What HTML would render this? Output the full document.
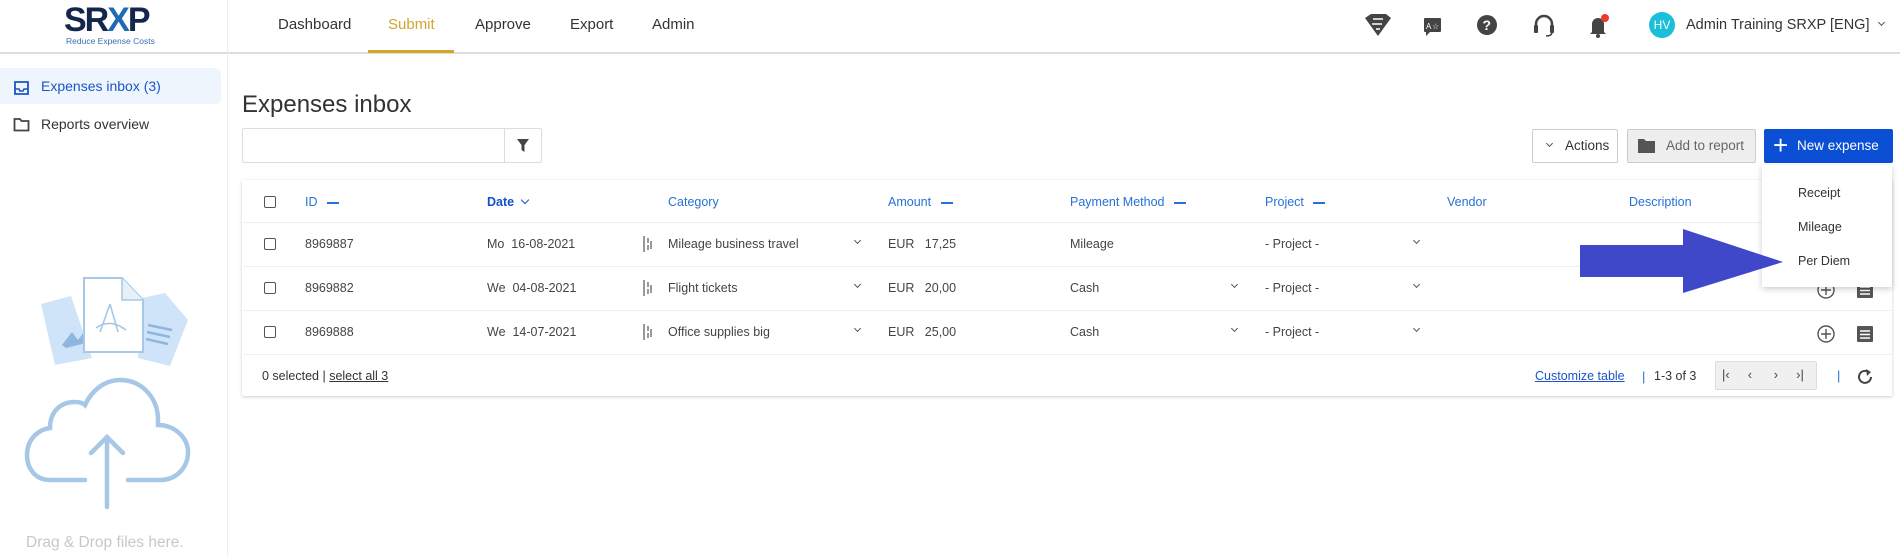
<!DOCTYPE html>
<html><head><meta charset="utf-8"><style>
*{margin:0;padding:0;box-sizing:border-box}
body{width:1900px;height:556px;background:#fff;font-family:"Liberation Sans",sans-serif;position:relative;overflow:hidden;color:#333}
.a{position:absolute;white-space:nowrap}
.nav{font-size:15px;color:#333;top:16px}
.th{font-size:12.5px;color:#2672d6;top:195px}
.td{font-size:12.5px;color:#444}
.cb{position:absolute;left:264px;width:12px;height:12px;border:1.3px solid #555;border-radius:2px}
.chev{position:absolute;width:6px;height:6px;border-right:1.3px solid #555;border-bottom:1.3px solid #555;transform:rotate(45deg)}
.sep{position:absolute;left:243px;width:1648px;height:1px;background:#eee}
</style></head><body>
<!-- header -->
<div class="a" style="left:0;top:52px;width:1900px;height:2px;background:#ddd"></div>
<div class="a" style="left:227px;top:0;width:1px;height:556px;background:#eee"></div>
<div class="a" style="left:64px;top:1px;font-size:34px;font-weight:bold;color:#14264a;letter-spacing:-2px;font-family:'Liberation Sans',sans-serif">SR<span style="color:#1f6ab5">X</span>P</div>
<div class="a" style="left:66px;top:36px;font-size:8.5px;color:#3a6fb5">Reduce Expense Costs</div>
<div class="a nav" style="left:278px">Dashboard</div>
<div class="a nav" style="left:388px;color:#d4a52a">Submit</div>
<div class="a" style="left:368px;top:50px;width:86px;height:3px;background:#d4a52a"></div>
<div class="a nav" style="left:475px">Approve</div>
<div class="a nav" style="left:570px">Export</div>
<div class="a nav" style="left:652px">Admin</div>
<!-- right icons -->
<svg class="a" style="left:1362px;top:12px" width="260" height="28" viewBox="0 0 260 28">
<path d="M3 6 L9 2 H24 L29 6 L16 24 Z" fill="#444"/><path d="M11 7 H21 M10 12 H20 M14 17 H18" stroke="#fff" stroke-width="1.6"/>
<rect x="62" y="6" width="17" height="14" rx="1" fill="#444"/><path d="M64 20 L64 24 L68 20Z" fill="#444"/><text x="64" y="17" font-size="8" fill="#fff" font-family="Liberation Sans">A</text><text x="70" y="17" font-size="8" fill="#fff">☆</text>
<circle cx="125" cy="13" r="10" fill="#444"/><text x="120.5" y="18" font-size="14" font-weight="bold" fill="#fff" font-family="Liberation Sans">?</text>
<path d="M174 18 V12 A8 8 0 0 1 190 12 V18" stroke="#444" stroke-width="2.5" fill="none"/><rect x="172" y="13" width="4" height="8" rx="1" fill="#444"/><rect x="188" y="13" width="4" height="8" rx="1" fill="#444"/><path d="M190 20 Q190 24 184 24" stroke="#444" stroke-width="1.5" fill="none"/>
<path d="M230 20 V12 A6 6 0 0 1 242 12 V20 L244 22 H228 Z" fill="#444"/><circle cx="236" cy="24" r="2" fill="#444"/><circle cx="243" cy="6" r="4" fill="#ee3a2d"/>
</svg>
<div class="a" style="left:1649px;top:12px;width:26px;height:26px;border-radius:50%;background:#1bbfd9;color:#fff;font-size:12px;line-height:26px;text-align:center">HV</div>
<div class="a" style="left:1686px;top:17px;font-size:14.5px;color:#333">Admin Training SRXP [ENG]</div>
<div class="chev" style="left:1879px;top:20px;width:5px;height:5px"></div>
<!-- sidebar -->
<div class="a" style="left:0;top:68px;width:221px;height:36px;background:#eef5fd;border-radius:0 6px 6px 0"></div>
<svg class="a" style="left:13px;top:80px" width="17" height="16"><path d="M2 2 H15 V14 H2 Z" stroke="#1a55c8" stroke-width="1.8" fill="none"/><path d="M2 9 H6 L7 11 H10 L11 9 H15" stroke="#1a55c8" stroke-width="1.6" fill="none"/></svg>
<div class="a" style="left:41px;top:78px;font-size:14px;color:#1a55c8">Expenses inbox (3)</div>
<svg class="a" style="left:13px;top:117px" width="17" height="15"><path d="M1.5 2 H7 L8.5 4 H15.5 V13.5 H1.5 Z" stroke="#444" stroke-width="1.8" fill="none"/></svg>
<div class="a" style="left:41px;top:116px;font-size:14px;color:#333">Reports overview</div>
<svg class="a" style="left:0;top:270px" width="227" height="250">
<polygon points="41,34 71,26 92,88 55,95" fill="#cfe4f8"/>
<polygon points="142,28 165,23 188,50 170,96 138,88" fill="#cfe4f8"/>
<path d="M62 75 L72 62 L78 70 L84 62 L90 72 L66 78Z" fill="#8fb6e0"/>
<path d="M148 55 L172 60 M147 62 L170 67 M146 69 L168 74" stroke="#8fb6e0" stroke-width="2.5"/>
<path d="M84 8 H122 L143 30 V82 H84 Z" fill="#fff" stroke="#a6c8e6" stroke-width="2"/>
<path d="M122 8 V30 H143" fill="#e6f0fa" stroke="#a6c8e6" stroke-width="1.5"/>
<path d="M110 34 L100 62 M110 34 L118 62 M96 58 Q110 48 126 60" stroke="#a6c8e6" stroke-width="1.6" fill="none"/>
<path d="M85 210 H50 C35 210 27 198 27 185 C27 170 37 160 50 158 C50 142 60 132 75 132 C80 132 83 133 85 135 C92 120 105 110 120 110 C142 110 158 128 158 150 L158 155 C175 155 188 168 188 182 C188 198 176 210 160 210 H128" stroke="#a6c8e6" stroke-width="4.5" fill="none" stroke-linecap="round"/>
<path d="M107 237 V167 M91 183 L107 167 L123 183" stroke="#a6c8e6" stroke-width="4.5" fill="none" stroke-linecap="round"/>
</svg>
<div class="a" style="left:26px;top:534px;font-size:15.5px;color:#c8c8c8">Drag &amp; Drop files here.</div>
<!-- main -->
<div class="a" style="left:242px;top:91px;font-size:24px;color:#333">Expenses inbox</div>
<div class="a" style="left:242px;top:128px;width:300px;height:35px;border:1px solid #ddd;border-radius:2px"></div>
<div class="a" style="left:504px;top:128px;width:1px;height:35px;background:#ddd"></div>
<svg class="a" style="left:516px;top:138px" width="14" height="15"><path d="M1 1 H13 L8.5 7 V14 L5.5 12 V7 Z" fill="#444"/></svg>
<div class="a" style="left:1532px;top:129px;width:86px;height:34px;border:1px solid #ccc;border-radius:2px"></div>
<div class="chev" style="left:1547px;top:141px;width:5px;height:5px"></div>
<div class="a" style="left:1565px;top:138px;font-size:13.5px;color:#333">Actions</div>
<div class="a" style="left:1627px;top:129px;width:129px;height:34px;border:1px solid #ccc;background:#eee;border-radius:2px"></div>
<svg class="a" style="left:1638px;top:138px" width="17" height="15"><path d="M0 1 H6 L8 3 H17 V15 H0 Z" fill="#555"/></svg>
<div class="a" style="left:1666px;top:138px;font-size:13.5px;color:#666">Add to report</div>
<div class="a" style="left:1764px;top:129px;width:129px;height:34px;background:#0a4fd4;border-radius:2px"></div>
<div class="a" style="left:1773px;top:129px;font-size:26px;color:#fff;line-height:32px">+</div>
<div class="a" style="left:1797px;top:138px;font-size:13.5px;color:#fff">New expense</div>
<!-- table card -->
<div class="a" style="left:242px;top:180px;width:1650px;height:216px;background:#fff;box-shadow:0 1px 3px rgba(0,0,0,.2);border-radius:2px"></div>
<div class="cb" style="top:196px"></div>
<div class="a th" style="left:305px">ID <span style="display:inline-block;width:12px;height:2px;background:#2672d6;vertical-align:middle;margin-left:6px"></span></div>
<div class="a th" style="left:487px;color:#1450c8;font-weight:bold">Date</div><div class="chev" style="left:522px;top:197px;border-color:#1450c8"></div>
<div class="a th" style="left:668px">Category</div>
<div class="a th" style="left:888px">Amount <span style="display:inline-block;width:12px;height:2px;background:#2672d6;vertical-align:middle;margin-left:6px"></span></div>
<div class="a th" style="left:1070px">Payment Method <span style="display:inline-block;width:12px;height:2px;background:#2672d6;vertical-align:middle;margin-left:6px"></span></div>
<div class="a th" style="left:1265px">Project <span style="display:inline-block;width:12px;height:2px;background:#2672d6;vertical-align:middle;margin-left:6px"></span></div>
<div class="a th" style="left:1447px">Vendor</div>
<div class="a th" style="left:1629px">Description</div>
<div class="sep" style="top:222px"></div>
<div class="sep" style="top:266px"></div>
<div class="sep" style="top:310px"></div>
<div class="sep" style="top:354px"></div>
<!-- rows -->
<div class="cb" style="top:238px"></div><div class="cb" style="top:282px"></div><div class="cb" style="top:326px"></div>
<div class="a td" style="left:305px;top:237px">8969887</div>
<div class="a td" style="left:305px;top:281px">8969882</div>
<div class="a td" style="left:305px;top:325px">8969888</div>
<div class="a td" style="left:487px;top:237px">Mo&nbsp; 16-08-2021</div>
<div class="a td" style="left:487px;top:281px">We&nbsp; 04-08-2021</div>
<div class="a td" style="left:487px;top:325px">We&nbsp; 14-07-2021</div>
<svg class="a" style="left:643px;top:236px" width="10" height="104"><g fill="#999"><rect x="0" y="0" width="2" height="16"/><rect x="4" y="2" width="2" height="5"/><rect x="4" y="9" width="2" height="5"/><rect x="7" y="5" width="2" height="8"/>
<rect x="0" y="44" width="2" height="16"/><rect x="4" y="46" width="2" height="5"/><rect x="4" y="53" width="2" height="5"/><rect x="7" y="49" width="2" height="8"/>
<rect x="0" y="88" width="2" height="16"/><rect x="4" y="90" width="2" height="5"/><rect x="4" y="97" width="2" height="5"/><rect x="7" y="93" width="2" height="8"/></g></svg>
<div class="a td" style="left:668px;top:237px">Mileage business travel</div>
<div class="a td" style="left:668px;top:281px">Flight tickets</div>
<div class="a td" style="left:668px;top:325px">Office supplies big</div>
<div class="chev" style="left:855px;top:238px;width:5px;height:5px"></div>
<div class="chev" style="left:855px;top:282px;width:5px;height:5px"></div>
<div class="chev" style="left:855px;top:326px;width:5px;height:5px"></div>
<div class="a td" style="left:888px;top:237px">EUR&nbsp;&nbsp; 17,25</div>
<div class="a td" style="left:888px;top:281px">EUR&nbsp;&nbsp; 20,00</div>
<div class="a td" style="left:888px;top:325px">EUR&nbsp;&nbsp; 25,00</div>
<div class="a td" style="left:1070px;top:237px">Mileage</div>
<div class="a td" style="left:1070px;top:281px">Cash</div>
<div class="a td" style="left:1070px;top:325px">Cash</div>
<div class="chev" style="left:1232px;top:282px;width:5px;height:5px"></div>
<div class="chev" style="left:1232px;top:326px;width:5px;height:5px"></div>
<div class="a td" style="left:1265px;top:237px">- Project -</div>
<div class="a td" style="left:1265px;top:281px">- Project -</div>
<div class="a td" style="left:1265px;top:325px">- Project -</div>
<div class="chev" style="left:1414px;top:238px;width:5px;height:5px"></div>
<div class="chev" style="left:1414px;top:282px;width:5px;height:5px"></div>
<div class="chev" style="left:1414px;top:326px;width:5px;height:5px"></div>
<svg class="a" style="left:1816px;top:280px" width="62" height="64">
<g><circle cx="10" cy="10" r="8" stroke="#555" stroke-width="1.4" fill="none"/><path d="M10 5 V15 M5 10 H15" stroke="#555" stroke-width="1.4"/></g>
<g transform="translate(0,44)"><circle cx="10" cy="10" r="8" stroke="#555" stroke-width="1.4" fill="none"/><path d="M10 5 V15 M5 10 H15" stroke="#555" stroke-width="1.4"/></g>
<g fill="#555"><rect x="41" y="2" width="16" height="16" rx="1"/><rect x="41" y="46" width="16" height="16" rx="1"/></g>
<g stroke="#fff" stroke-width="1.5"><path d="M44 7 H54 M44 10.5 H54 M44 14 H54"/><path d="M44 51 H54 M44 54.5 H54 M44 58 H54"/></g>
</svg>
<!-- footer -->
<div class="a td" style="left:262px;top:369px;color:#333">0 selected | <span style="text-decoration:underline">select all 3</span></div>
<div class="a td" style="left:1535px;top:369px;color:#1a55c8;text-decoration:underline">Customize table</div>
<div class="a" style="left:1642px;top:369px;font-size:13px;color:#2672d6">|</div>
<div class="a td" style="left:1654px;top:369px;color:#333">1-3 of 3</div>
<div class="a" style="left:1715px;top:361px;width:102px;height:29px;background:#f0f0f0;border:1px solid #ddd;border-radius:2px"></div>
<div class="a" style="left:1722px;top:367px;font-size:13px;color:#444;letter-spacing:0">|‹&nbsp;&nbsp;&nbsp;&nbsp; ‹&nbsp;&nbsp;&nbsp;&nbsp;&nbsp; ›&nbsp;&nbsp;&nbsp;&nbsp; ›|</div>
<div class="a" style="left:1837px;top:368px;font-size:13px;color:#2672d6">|</div>
<svg class="a" style="left:1858px;top:368px" width="16" height="18"><path d="M13 9 A6 6 0 1 1 10.5 4" stroke="#444" stroke-width="2" fill="none"/><path d="M8 1 L13 4 L9 8 Z" fill="#444"/></svg>
<!-- dropdown -->
<div class="a" style="left:1762px;top:165px;width:130px;height:122px;background:#fff;box-shadow:0 2px 6px rgba(0,0,0,.2)"></div>
<div class="a td" style="left:1798px;top:186px;color:#333">Receipt</div>
<div class="a td" style="left:1798px;top:220px;color:#333">Mileage</div>
<div class="a td" style="left:1798px;top:254px;color:#333">Per Diem</div>
<!-- arrow -->
<svg class="a" style="left:1570px;top:220px" width="220" height="80"><polygon points="10,25 113,25 113,9 213,42 113,73 113,57 10,57" fill="#3e48c9"/></svg>
</body></html>
